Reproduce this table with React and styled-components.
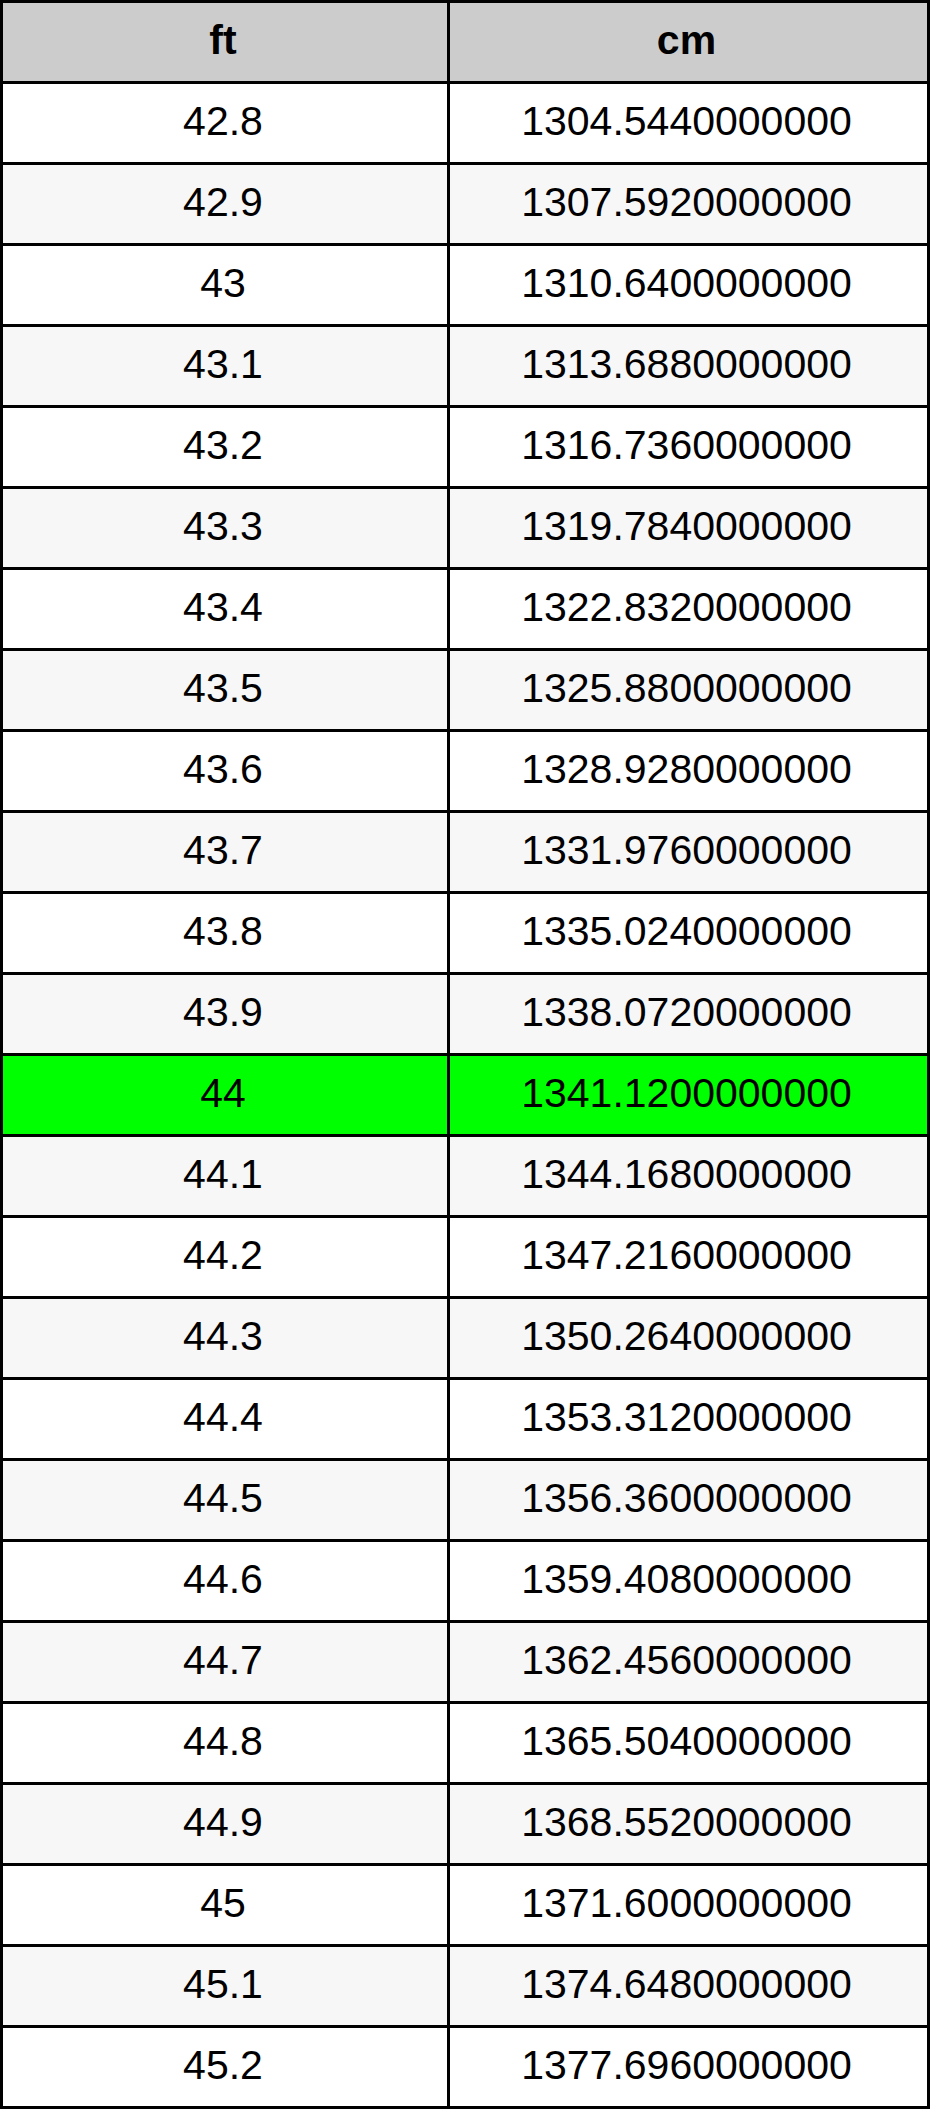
import React from "react";
import styled, { createGlobalStyle } from "styled-components";

const GlobalStyle = createGlobalStyle`
  body {
    margin: 0;
    background: #ffffff;
    font-family: "Liberation Sans", Arial, sans-serif;
  }
`;

const Table = styled.div`
  width: 930px;
  border-top: 3px solid #000;
  border-left: 3px solid #000;
  box-sizing: border-box;
`;

const Row = styled.div`
  display: grid;
  grid-template-columns: 447px 480px;
  background: ${(p) =>
    p.$head ? "#cccccc" : p.$hit ? "#00ff00" : p.$odd ? "#f7f7f7" : "#ffffff"};
`;

const Cell = styled.div`
  box-sizing: border-box;
  height: 81px;
  border-right: 3px solid #000;
  border-bottom: 3px solid #000;
  display: flex;
  align-items: center;
  justify-content: center;
  padding-right: 4px;
  padding-bottom: 3px;
  font-size: 41px;
  font-weight: ${(p) => (p.$head ? 700 : 400)};
  color: #000;
`;

const rows = [
  ["42.8", "1304.5440000000"],
  ["42.9", "1307.5920000000"],
  ["43", "1310.6400000000"],
  ["43.1", "1313.6880000000"],
  ["43.2", "1316.7360000000"],
  ["43.3", "1319.7840000000"],
  ["43.4", "1322.8320000000"],
  ["43.5", "1325.8800000000"],
  ["43.6", "1328.9280000000"],
  ["43.7", "1331.9760000000"],
  ["43.8", "1335.0240000000"],
  ["43.9", "1338.0720000000"],
  ["44", "1341.1200000000"],
  ["44.1", "1344.1680000000"],
  ["44.2", "1347.2160000000"],
  ["44.3", "1350.2640000000"],
  ["44.4", "1353.3120000000"],
  ["44.5", "1356.3600000000"],
  ["44.6", "1359.4080000000"],
  ["44.7", "1362.4560000000"],
  ["44.8", "1365.5040000000"],
  ["44.9", "1368.5520000000"],
  ["45", "1371.6000000000"],
  ["45.1", "1374.6480000000"],
  ["45.2", "1377.6960000000"],
];

export default function App() {
  return (
    <>
      <GlobalStyle />
      <Table>
        <Row $head>
          <Cell $head>ft</Cell>
          <Cell $head>cm</Cell>
        </Row>
        {rows.map(([ft, cm], i) => (
          <Row key={ft} $odd={i % 2 === 1} $hit={ft === "44"}>
            <Cell>{ft}</Cell>
            <Cell>{cm}</Cell>
          </Row>
        ))}
      </Table>
    </>
  );
}
